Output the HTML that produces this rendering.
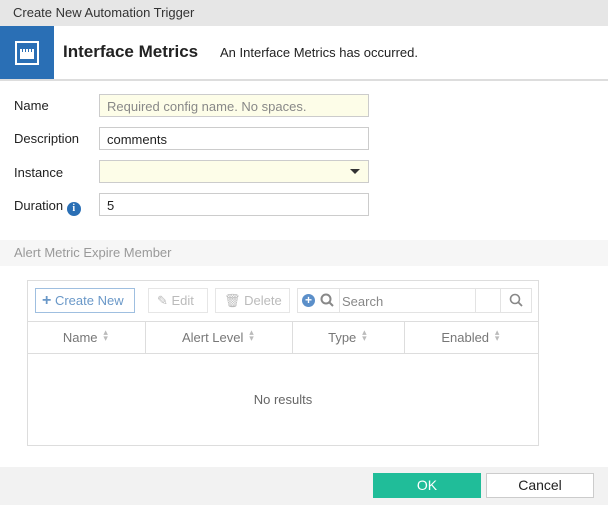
<!DOCTYPE html>
<html><head><style>
*{box-sizing:border-box;margin:0;padding:0}
body{width:608px;height:509px;background:#fff;font-family:"Liberation Sans",sans-serif;font-size:13px;color:#222;position:relative;overflow:hidden}
.abs{position:absolute}
.lbl{position:absolute;left:14px;font-size:13px;color:#222}
.inp{position:absolute;left:99px;width:270px;height:23px;border:1px solid #ccc;padding:4px 7px;font-size:13px}
.btn{position:absolute;top:288px;height:25px;border:1px solid #e6e6e6;color:#bbb;font-size:13px;padding:4px 8px;white-space:nowrap}
.th{position:absolute;top:322px;height:32px;border-right:1px solid #ddd;color:#777;text-align:center;line-height:31px;font-size:13px}
.sort{display:inline-block;font-size:9px;color:#bbb;vertical-align:1px;line-height:6px;width:9px}
</style></head><body>
<div class="abs" style="left:0;top:0;width:608px;height:26px;background:#e6e6e6;padding:5px 13px;font-size:13px;color:#333">Create New Automation Trigger</div>
<div class="abs" style="left:0;top:26px;width:54px;height:54px;background:#2a6fb5"></div>
<svg class="abs" style="left:15px;top:41px" width="24" height="24" viewBox="0 0 24 24"><rect x="1" y="1" width="22" height="22" fill="none" stroke="#fff" stroke-width="2"/><rect x="5" y="6" width="14" height="12" fill="#fff"/><g fill="#2a6fb5"><rect x="7" y="6" width="1" height="5"/><rect x="10" y="6" width="1" height="5"/><rect x="13" y="6" width="1" height="5"/><rect x="16" y="6" width="1" height="5"/><rect x="5" y="6" width="14" height="2"/></g></svg>
<div class="abs" style="left:0;top:79px;width:608px;height:2px;background:#ddd"></div>
<div class="abs" style="left:63px;top:42px;font-size:17px;font-weight:bold;color:#222">Interface Metrics</div>
<div class="abs" style="left:220px;top:45px;font-size:13px;color:#222">An Interface Metrics has occurred.</div>

<div class="lbl" style="top:98px">Name</div>
<div class="inp" style="top:94px;background:#fdfde8;color:#888">Required config name. No spaces.</div>
<div class="lbl" style="top:131px">Description</div>
<div class="inp" style="top:127px">comments</div>
<div class="lbl" style="top:165px">Instance</div>
<div class="inp" style="top:160px;background:#fdfde8"><span style="position:absolute;right:8px;top:8px;border-left:5px solid transparent;border-right:5px solid transparent;border-top:5px solid #333"></span></div>
<div class="lbl" style="top:198px">Duration <span style="display:inline-block;width:14px;height:14px;border-radius:50%;background:#2a6fb5;color:#fff;font-size:10px;font-weight:bold;text-align:center;line-height:14px;font-family:'Liberation Serif',serif;vertical-align:-1px">i</span></div>
<div class="inp" style="top:193px">5</div>

<div class="abs" style="left:0;top:240px;width:608px;height:26px;background:#f6f6f6;padding:5px 14px;color:#999;font-size:13px">Alert Metric Expire Member</div>

<div class="abs" style="left:27px;top:280px;width:512px;height:166px;border:1px solid #ddd"></div>
<div class="btn" style="left:35px;width:100px;border-color:#9fbfe0;color:#6a98c8;padding:4px 6px"><b style="font-size:16px;line-height:12px">+</b> Create New</div>
<div class="btn" style="left:148px;width:60px">✎ Edit</div>
<div class="btn" style="left:215px;width:75px">🗑 Delete</div>
<div class="abs" style="left:297px;top:288px;width:235px;height:25px;border:1px solid #e3e3e3"></div>
<div class="abs" style="left:302px;top:294px;width:13px;height:13px;border-radius:50%;background:#5b8fc9;color:#fff;font-size:12px;font-weight:bold;text-align:center;line-height:13px">+</div>
<svg class="abs" style="left:320px;top:293px" width="14" height="14"><circle cx="6" cy="6" r="4.5" fill="none" stroke="#888" stroke-width="2"/><line x1="9" y1="9" x2="13" y2="13" stroke="#888" stroke-width="2"/></svg>
<div class="abs" style="left:339px;top:289px;width:1px;height:23px;background:#e3e3e3"></div>
<div class="abs" style="left:342px;top:294px;color:#888">Search</div>
<div class="abs" style="left:475px;top:289px;width:1px;height:23px;background:#e3e3e3"></div>
<div class="abs" style="left:500px;top:289px;width:1px;height:23px;background:#e3e3e3"></div>
<svg class="abs" style="left:509px;top:293px" width="14" height="14"><circle cx="6" cy="6" r="4.5" fill="none" stroke="#888" stroke-width="1.6"/><line x1="9" y1="9" x2="13" y2="13" stroke="#888" stroke-width="1.8"/></svg>

<div class="abs" style="left:28px;top:321px;width:510px;height:1px;background:#ddd"></div>
<div class="th" style="left:28px;width:118px">Name <span class="sort">▴<br>▾</span></div>
<div class="th" style="left:146px;width:147px">Alert Level <span class="sort">▴<br>▾</span></div>
<div class="th" style="left:293px;width:112px">Type <span class="sort">▴<br>▾</span></div>
<div class="th" style="left:405px;width:133px;border-right:none">Enabled <span class="sort">▴<br>▾</span></div>
<div class="abs" style="left:28px;top:353px;width:510px;height:1px;background:#ddd"></div>
<div class="abs" style="left:28px;top:392px;width:510px;text-align:center;color:#666">No results</div>

<div class="abs" style="left:0;top:467px;width:608px;height:38px;background:#f2f2f2"></div>
<div class="abs" style="left:373px;top:473px;width:108px;height:25px;background:#20bd99;color:#fff;text-align:center;line-height:25px;font-size:14px">OK</div>
<div class="abs" style="left:486px;top:473px;width:108px;height:25px;background:#fff;border:1px solid #ccc;text-align:center;line-height:23px;font-size:14px">Cancel</div>
</body></html>
